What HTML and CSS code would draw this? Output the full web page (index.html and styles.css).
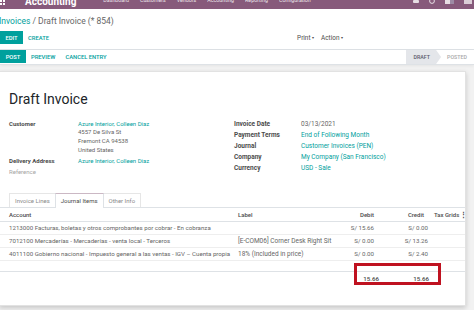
FILE: index.html
```html
<!DOCTYPE html>
<html lang="en">
<head>
    <meta charset="UTF-8">
    <meta name="viewport" content="width=device-width, initial-scale=1.0">
    <title>Draft Invoice</title>
    <link rel="stylesheet" href="styles.css">
</head>
<body>
    <div class="navbar">
        <span class="nav-apps">
            <svg width="6" height="9" viewBox="0 0 6 9"><rect x="0" y="0" width="2" height="2" fill="#fff"/><rect x="3" y="0" width="2" height="2" fill="#fff"/><rect x="0" y="3" width="2" height="2" fill="#fff"/><rect x="3" y="3" width="2" height="2" fill="#fff"/></svg>
        </span>
        <span class="nav-brand">Accounting</span>
        <span class="nav-item first">Dashboard</span>
        <span class="nav-item">Customers</span>
        <span class="nav-item">Vendors</span>
        <span class="nav-item">Accounting</span>
        <span class="nav-item">Reporting</span>
        <span class="nav-item">Configuration</span>
        <span class="nav-icons">
            <svg width="6" height="9" viewBox="0 0 6 9"><rect x="0" y="0" width="6" height="3" rx="1" fill="#fff" opacity="0.8"/></svg>
            <svg width="6" height="9" viewBox="0 0 6 9"><circle cx="3" cy="1" r="2.4" fill="none" stroke="#fff" stroke-width="1" opacity="0.8"/></svg>
            <svg width="9" height="9" viewBox="0 0 9 9"><rect x="0" y="0" width="5" height="4" fill="#fff" opacity="0.8"/><rect x="5" y="0" width="4" height="4" fill="#9d8aa4"/></svg>
            <svg width="8" height="9" viewBox="0 0 8 9"><rect x="0" y="0" width="8" height="4" fill="#fff" opacity="0.7"/></svg>
        </span>
    </div>

    <div class="control-panel">
        <div class="breadcrumb"><a href="#">Invoices</a> / Draft Invoice (* 854)</div>
        <div class="cp-row">
            <div class="cp-buttons">
                <button class="btn btn-primary">Edit</button>
                <button class="btn btn-link">Create</button>
            </div>
            <div class="cp-sidebar">
                <span class="dropdown">Print <span class="caret">&#9662;</span></span>
                <span class="dropdown">Action <span class="caret">&#9662;</span></span>
            </div>
        </div>
    </div>

    <div class="statusbar">
        <div class="status-buttons">
            <button class="btn btn-primary">Post</button>
            <button class="btn btn-link">Preview</button>
            <button class="btn btn-link">Cancel Entry</button>
        </div>
        <div class="status-steps">
            <span class="step active">DRAFT</span>
            <span class="step">POSTED</span>
        </div>
    </div>

    <div class="content">
        <div class="sheet">
            <h1 class="title">Draft Invoice</h1>

            <div class="groups">
                <div class="group group-left">
                    <div class="label">Customer</div>
                    <div class="value">
                        <a href="#">Azure Interior, Colleen Diaz</a><br>
                        4557 De Silva St<br>
                        Fremont CA 94538<br>
                        United States
                    </div>
                    <div class="label">Delivery Address</div>
                    <div class="value"><a href="#">Azure Interior, Colleen Diaz</a></div>
                    <div class="label muted">Reference</div>
                    <div class="value"></div>
                </div>
                <div class="group group-right">
                    <div class="label">Invoice Date</div>
                    <div class="value">03/13/2021</div>
                    <div class="label">Payment Terms</div>
                    <div class="value"><a href="#">End of Following Month</a></div>
                    <div class="label">Journal</div>
                    <div class="value"><a href="#">Customer Invoices (PEN)</a></div>
                    <div class="label">Company</div>
                    <div class="value"><a href="#">My Company (San Francisco)</a></div>
                    <div class="label">Currency</div>
                    <div class="value"><a href="#">USD - Sale</a></div>
                </div>
            </div>

            <ul class="tabs">
                <li class="tab">Invoice Lines</li>
                <li class="tab active">Journal Items</li>
                <li class="tab">Other Info</li>
            </ul>

            <table class="lines">
                <colgroup>
                    <col class="c-account">
                    <col class="c-label">
                    <col class="c-debit">
                    <col class="c-credit">
                    <col class="c-tax">
                    <col class="c-opt">
                </colgroup>
                <thead>
                    <tr>
                        <th class="account">Account</th>
                        <th>Label</th>
                        <th class="num debit">Debit</th>
                        <th class="num credit">Credit</th>
                        <th class="tax">Tax Grids</th>
                        <th class="opt">&#8942;</th>
                    </tr>
                </thead>
                <tbody>
                    <tr>
                        <td class="account">1213000 Facturas, boletas y otros comprobantes por cobrar - En cobranza</td>
                        <td class="desc"></td>
                        <td class="num debit">S/ 15.66</td>
                        <td class="num credit">S/ 0.00</td>
                        <td></td>
                        <td></td>
                    </tr>
                    <tr>
                        <td class="account">7012100 Mercaderías - Mercaderías - venta local - Terceros</td>
                        <td class="desc">[E-COM06] Corner Desk Right Sit</td>
                        <td class="num debit">S/ 0.00</td>
                        <td class="num credit">S/ 13.26</td>
                        <td></td>
                        <td></td>
                    </tr>
                    <tr>
                        <td class="account">4011100 Gobierno nacional - Impuesto general a las ventas - IGV – Cuenta propia</td>
                        <td class="desc">18% (Included in price)</td>
                        <td class="num debit">S/ 0.00</td>
                        <td class="num credit">S/ 2.40</td>
                        <td></td>
                        <td></td>
                    </tr>
                    <tr class="filler"><td colspan="6"></td></tr>
                </tbody>
                <tfoot>
                    <tr>
                        <td></td>
                        <td></td>
                        <td class="num total">15.66</td>
                        <td class="num total">15.66</td>
                        <td></td>
                        <td></td>
                    </tr>
                </tfoot>
            </table>

            <div class="highlight"></div>
        </div>
    </div>
</body>
</html>
```

FILE: styles.css
```css
body {
    font-family: 'Roboto', sans-serif;
    margin: 0;
    padding: 0;
    width: 474px;
    height: 310px;
    overflow: hidden;
    background-color: #f2f2f2;
    color: #666;
}

a {
    color: #00a09d;
    text-decoration: none;
}

/* top menu, only its lower edge is in view */
.navbar {
    height: 9px;
    background-color: #875a7b;
    display: flex;
    align-items: flex-end;
    overflow: hidden;
    color: #fff;
    white-space: nowrap;
}

.nav-apps {
    display: flex;
    align-self: flex-start;
}

.nav-brand {
    font-size: 10px;
    font-weight: 700;
    line-height: 10px;
    padding-bottom: 2.5px;
    margin-left: 19px;
}

.nav-item {
    font-size: 5.3px;
    line-height: 6px;
    padding-bottom: 5.6px;
    margin-left: 11px;
    opacity: 0.85;
}

.nav-item.first {
    margin-left: 27px;
}

.nav-icons {
    display: flex;
    align-self: flex-start;
    gap: 10px;
    margin-left: auto;
    margin-right: 2px;
}

/* breadcrumb + buttons */
.control-panel {
    background-color: #fff;
    padding: 6px 0 5px 0;
    border-bottom: 1px solid #dee2e6;
}

.breadcrumb {
    font-size: 8.5px;
    line-height: 12px;
    margin-left: -1px;
    color: #666;
}

.cp-row {
    display: flex;
    align-items: center;
    margin-top: 4px;
    height: 13px;
}

.cp-buttons,
.status-buttons {
    display: flex;
    align-items: center;
}

.btn {
    font-family: 'Roboto', sans-serif;
    font-size: 5.8px;
    font-weight: 500;
    text-transform: uppercase;
    border: none;
    border-radius: 0;
    height: 13px;
    padding: 0 5px;
    cursor: pointer;
    background: none;
}

.btn-primary {
    background-color: #00a09d;
    color: #fff;
    width: 23px;
    padding: 0;
}

.status-buttons .btn-primary {
    width: 26px;
}

.btn-link {
    color: #00a09d;
}

.cp-sidebar {
    display: flex;
    gap: 7px;
    margin-left: auto;
    margin-right: 131px;
}

.dropdown {
    font-size: 6.4px;
    color: #4c4c4c;
}

.caret {
    font-size: 4px;
    vertical-align: 1px;
}

/* status bar */
.statusbar {
    background-color: #fff;
    height: 14px;
    display: flex;
    align-items: flex-start;
    justify-content: space-between;
    border-bottom: 1px solid #dee2e6;
    box-shadow: 0 1px 3px rgba(0, 0, 0, 0.06);
}

.status-steps {
    display: flex;
    height: 14px;
    margin-right: 7px;
}

.step {
    font-size: 5.3px;
    font-weight: 500;
    line-height: 14px;
    color: #aaa;
    padding: 0 0 0 6px;
}

.step.active {
    background-color: #e4e6ea;
    color: #5b5b6b;
    padding: 0 11px 0 8px;
    clip-path: polygon(0 0, calc(100% - 5px) 0, 100% 50%, calc(100% - 5px) 100%, 0 100%);
}

/* the sheet */
.content {
    padding-top: 6px;
}

.sheet {
    position: relative;
    background-color: #fff;
    border: 1px solid #e2e2e2;
    margin-left: -1px;
    width: 465px;
    padding: 18.5px 0 20px 0;
    box-shadow: 0 2px 5px rgba(0, 0, 0, 0.18);
}

.title {
    font-size: 14px;
    font-weight: 400;
    line-height: 17px;
    color: #212529;
    margin: 0 0 12px 0;
    padding-left: 9px;
}

.groups {
    display: grid;
    grid-template-columns: 225px 1fr;
    padding-left: 9px;
}

.group {
    display: grid;
    align-content: start;
}

.group-left {
    grid-template-columns: 69px 1fr;
}

.group-right {
    grid-template-columns: 67px 1fr;
}

.label,
.value {
    font-size: 6px;
    line-height: 8.7px;
    padding-bottom: 2.3px;
}

.group-right .label,
.group-right .value {
    font-size: 6.5px;
}

.label {
    font-weight: 700;
    color: #4c4c4c;
}

.label.muted {
    font-weight: 400;
    color: #a5a5a5;
}

.value {
    color: #666;
}

/* notebook */
.tabs {
    list-style: none;
    display: flex;
    margin: 14.4px 0 0 0;
    padding: 0 0 0 9px;
    border-bottom: 1px solid #dee2e6;
}

.tab {
    font-size: 6px;
    line-height: 13px;
    padding: 0 5px;
    color: #8a8a8a;
    border: 1px solid #e6e6e6;
    border-bottom: none;
    margin-right: -1px;
}

.tab.active {
    color: #4c4c4c;
    background-color: #fff;
    border-color: #dee2e6;
    border-top-color: #cbb8c4;
    margin-bottom: -1px;
    height: 14px;
    position: relative;
}

/* journal items */
.lines {
    width: 465px;
    table-layout: fixed;
    border-collapse: collapse;
    font-size: 6.15px;
    color: #666;
}

.c-account { width: 234px; }
.c-label { width: 100px; }
.c-debit { width: 48px; }
.c-credit { width: 50px; }
.c-tax { width: 28px; }
.c-opt { width: 5px; }

.lines th,
.lines td {
    padding: 0 0 0 4px;
    white-space: nowrap;
    overflow: hidden;
    text-align: left;
}

.lines th {
    font-size: 6px;
    font-weight: 500;
    color: #4c4c4c;
    height: 13px;
    border-bottom: 1px solid #dee2e6;
}

.lines tbody td {
    height: 12px;
    border-top: 1px solid #eeeeee;
}

.lines td.desc {
    font-size: 6.5px;
}

.lines th.account,
.lines td.account {
    padding-left: 9px;
}

.lines .num {
    text-align: right;
    padding-left: 0;
}

.lines th.debit,
.lines td.debit { padding-right: 8px; }
.lines th.credit { padding-right: 8px; }
.lines td.credit { padding-right: 4px; }

.lines th.tax {
    padding-left: 2px;
}

.lines th.opt {
    padding: 0;
    font-size: 7px;
    font-weight: 700;
}

.lines tr.filler td {
    height: 10px;
    border-top: 1px solid #eeeeee;
}

.lines tfoot td {
    height: 13px;
    border-top: 1px solid #dee2e6;
}

.lines td.total {
    font-weight: 500;
    color: #4c4c4c;
    padding-right: 3px;
}

/* red annotation box around the totals */
.highlight {
    position: absolute;
    left: 354px;
    top: 191px;
    width: 81px;
    height: 16px;
    border: 3px solid #bf1220;
}
```
